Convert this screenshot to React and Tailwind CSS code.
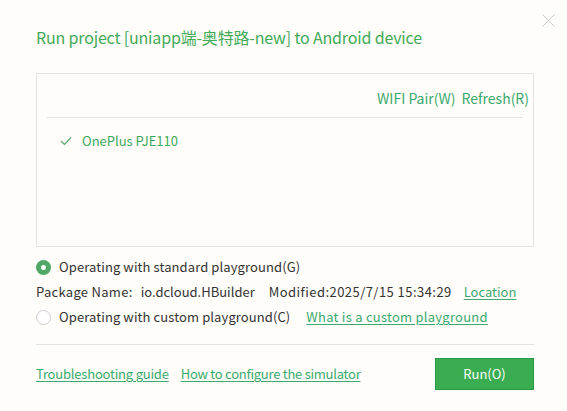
import React from "react";

export default function App() {
  return (
    <div className="relative w-[567px] h-[411px] bg-[#fffdf9] text-[13px] text-[#333333] font-['Noto_Sans_CJK_SC','Noto_Sans',sans-serif]">
      <button className="absolute left-[542px] top-[14px] w-[13px] h-[13px]">
        <svg width="13" height="13" viewBox="0 0 13 13">
          <path d="M0.5 0.5 L12.5 12.5 M12.5 0.5 L0.5 12.5" stroke="#c8c8c8" strokeWidth="1" />
        </svg>
      </button>
      <div className="pl-[36px] pr-[33px] pt-[26px]">
        <h1 className="text-[16px] leading-[22px] tracking-[-0.17px] text-[#42aa58]">
          Run project [uniapp端-奥特路-new] to Android device
        </h1>
        <div className="mt-[25px] h-[174px] border border-[#e3e3e3]">
          <div className="flex justify-end gap-[6px] pr-[4px] pt-[14px] pb-[9px] text-[14px] leading-[20px] text-[#3aaa6e]">
            <span>WIFI Pair(W)</span>
            <span>Refresh(R)</span>
          </div>
          <div className="border-t border-[#e3e3e3] mx-[10px]" />
          <div className="flex items-center gap-[10px] pl-[23px] pt-[13px] text-[13px] leading-[20px] text-[#3aaa5a]">
            <svg width="12" height="10" viewBox="0 0 12 10">
              <path d="M1 5 L4.5 8.5 L11 1.5" fill="none" stroke="#5aaa6e" strokeWidth="1.2" />
            </svg>
            <span>OnePlus PJE110</span>
          </div>
        </div>
        <div className="mt-[10px] flex flex-col gap-[5px]">
          <label className="flex items-center gap-[8px] h-[20px]">
            <span className="w-[15px] h-[15px] rounded-full bg-[#4fa866] flex items-center justify-center">
              <span className="w-[5px] h-[5px] rounded-full bg-white" />
            </span>
            <span className="tracking-[0.1px]">Operating with standard playground(G)</span>
          </label>
          <div className="flex items-center h-[20px]">
            <span className="tracking-[0.3px]">Package Name:</span>
            <span className="ml-[8px]">io.dcloud.HBuilder</span>
            <span className="ml-[14px] tracking-[0.45px]">Modified:2025/7/15 15:34:29</span>
            <a className="ml-[12px] text-[#3aaa6e] underline underline-offset-2">Location</a>
          </div>
          <label className="flex items-center gap-[8px] h-[20px]">
            <span className="w-[15px] h-[15px] rounded-full border border-[#cfcfcf] bg-white" />
            <span className="tracking-[0.1px]">Operating with custom playground(C)</span>
            <a className="ml-[8px] tracking-[0.25px] text-[#3aaa6e] underline underline-offset-2">
              What is a custom playground
            </a>
          </label>
        </div>
        <div className="mt-[17px] border-t border-[#e3e3e3]" />
        <div className="mt-[13px] flex items-center justify-between">
          <div className="flex items-center gap-[12px] text-[#3aaa6e]">
            <a className="underline underline-offset-2 tracking-[-0.2px]">Troubleshooting guide</a>
            <a className="underline underline-offset-2 tracking-[-0.25px]">How to configure the simulator</a>
          </div>
          <button className="w-[99px] h-[32px] bg-[#3aad52] border border-[#2b9a45] text-white text-[13px]">
            Run(O)
          </button>
        </div>
      </div>
    </div>
  );
}
